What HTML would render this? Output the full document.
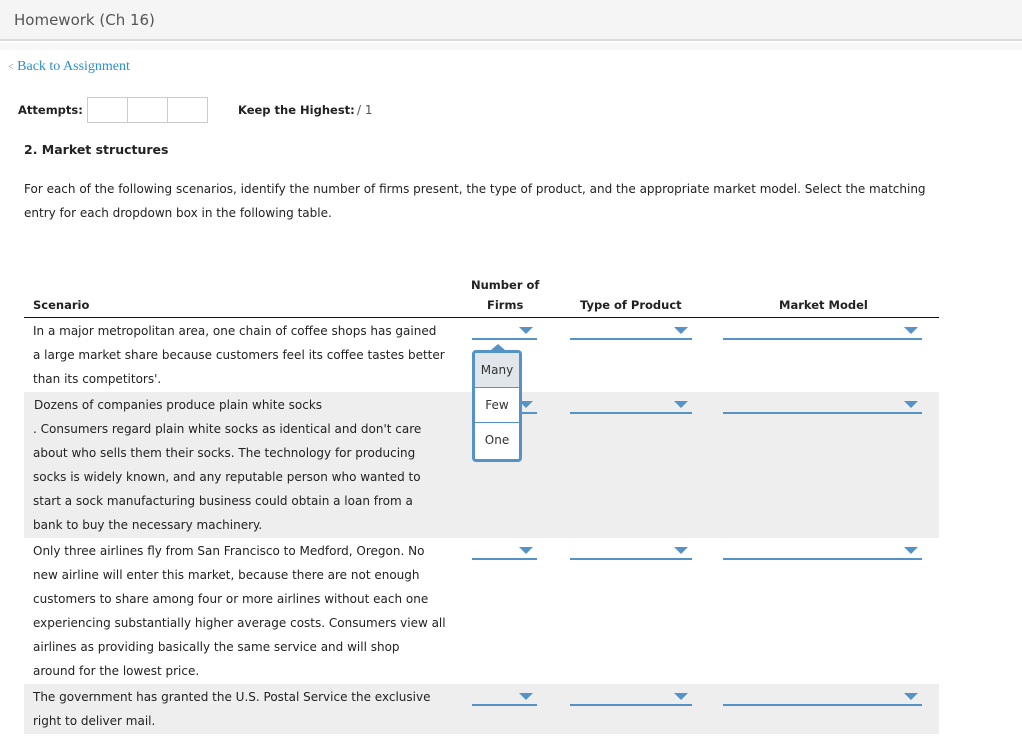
<!DOCTYPE html>
<html><head><meta charset="utf-8"><style>
*{margin:0;padding:0;box-sizing:border-box}
body{width:1022px;height:742px;background:#fff;font-family:"DejaVu Sans","Liberation Sans",sans-serif;font-size:12px;color:#222;position:relative;overflow:hidden}
.a{position:absolute;white-space:nowrap}
.hdr{position:absolute;left:0;top:0;width:1022px;height:41px;background:#f5f5f5;border-bottom:2px solid #dcdcdc}
.band{position:absolute;left:0;top:43px;width:1022px;height:7px;background:#f7f7f7}
.g{position:absolute;left:24px;width:915px;background:#eeeeee}
.ln{position:absolute;height:2px;background:#5592c6}
.tr{position:absolute;width:0;height:0;border-left:7px solid transparent;border-right:7px solid transparent;border-top:7px solid #5592c6}
.b{font-weight:bold;font-size:11.5px}
.box{position:absolute;top:97px;width:41px;height:26px;border:1px solid #ccc;background:#fff}
</style></head><body>
<div class="hdr"></div><div class="band"></div>
<div class="a" style="left:14px;top:11px;font-family:'DejaVu Sans',sans-serif;font-size:15px;color:#555">Homework (Ch 16)</div>
<div class="a" style="left:8px;top:59px;font-family:'Liberation Serif',serif;font-size:14px;color:#2a8fd0"><span style="font-size:10px;color:#888">&lt;</span> Back to Assignment</div>
<div class="a b" style="left:18px;top:103px">Attempts:</div>
<div class="box" style="left:87px"></div><div class="box" style="left:127px"></div><div class="box" style="left:167px"></div>
<div class="a b" style="left:238px;top:103px">Keep the Highest:</div>
<div class="a" style="left:357px;top:103px;color:#555">/ 1</div>
<div class="a b" style="left:24px;top:142px;font-size:12.5px">2. Market structures</div>
<div class="a" style="left:24px;top:182px">For each of the following scenarios, identify the number of firms present, the type of product, and the appropriate market model. Select the matching</div>
<div class="a" style="left:24px;top:206px">entry for each dropdown box in the following table.</div>

<div class="a b" style="left:471px;top:278px">Number of</div>
<div class="a b" style="left:33px;top:298px">Scenario</div>
<div class="a b" style="left:487px;top:298px">Firms</div>
<div class="a b" style="left:580px;top:298px">Type of Product</div>
<div class="a b" style="left:779px;top:298px">Market Model</div>
<div style="position:absolute;left:24px;top:317px;width:915px;height:1px;background:#111"></div>

<div class="g" style="top:392px;height:146px"></div>
<div class="g" style="top:684px;height:50px"></div>

<div class="a" style="left:33px;top:319px;line-height:24px">In a major metropolitan area, one chain of coffee shops has gained<br>a large market share because customers feel its coffee tastes better<br>than its competitors'.</div>
<div class="a" style="left:34px;top:393px;line-height:24px">Dozens of companies produce plain white socks</div>
<div class="a" style="left:33px;top:417px;line-height:24px">. Consumers regard plain white socks as identical and don't care<br>about who sells them their socks. The technology for producing<br>socks is widely known, and any reputable person who wanted to<br>start a sock manufacturing business could obtain a loan from a<br>bank to buy the necessary machinery.</div>
<div class="a" style="left:33px;top:539px;line-height:24px">Only three airlines fly from San Francisco to Medford, Oregon. No<br>new airline will enter this market, because there are not enough<br>customers to share among four or more airlines without each one<br>experiencing substantially higher average costs. Consumers view all<br>airlines as providing basically the same service and will shop<br>around for the lowest price.</div>
<div class="a" style="left:33px;top:685px;line-height:24px">The government has granted the U.S. Postal Service the exclusive<br>right to deliver mail.</div>

<div class="ln" style="left:472px;top:338px;width:65px"></div><div class="tr" style="left:519px;top:327px"></div>
<div class="ln" style="left:570px;top:338px;width:122px"></div><div class="tr" style="left:674px;top:327px"></div>
<div class="ln" style="left:723px;top:338px;width:199px"></div><div class="tr" style="left:904px;top:327px"></div>

<div class="ln" style="left:472px;top:412px;width:65px"></div><div class="tr" style="left:519px;top:401px"></div>
<div class="ln" style="left:570px;top:412px;width:122px"></div><div class="tr" style="left:674px;top:401px"></div>
<div class="ln" style="left:723px;top:412px;width:199px"></div><div class="tr" style="left:904px;top:401px"></div>

<div class="ln" style="left:472px;top:558px;width:65px"></div><div class="tr" style="left:519px;top:547px"></div>
<div class="ln" style="left:570px;top:558px;width:122px"></div><div class="tr" style="left:674px;top:547px"></div>
<div class="ln" style="left:723px;top:558px;width:199px"></div><div class="tr" style="left:904px;top:547px"></div>

<div class="ln" style="left:472px;top:704px;width:65px"></div><div class="tr" style="left:519px;top:693px"></div>
<div class="ln" style="left:570px;top:704px;width:122px"></div><div class="tr" style="left:674px;top:693px"></div>
<div class="ln" style="left:723px;top:704px;width:199px"></div><div class="tr" style="left:904px;top:693px"></div>

<div style="position:absolute;left:491px;top:344px;width:0;height:0;border-left:7px solid transparent;border-right:7px solid transparent;border-bottom:6px solid #5592c6"></div>
<div style="position:absolute;left:472px;top:350px;width:50px;height:112px;border:3px solid #5592c6;border-radius:4px;background:#fff;overflow:hidden">
<div style="height:35px;background:#e1e6ea;border-bottom:1px solid #5592c6;text-align:center;line-height:35px;color:#333">Many</div>
<div style="height:35px;border-bottom:1px solid #5592c6;text-align:center;line-height:35px;color:#333">Few</div>
<div style="height:35px;text-align:center;line-height:35px;color:#333">One</div>
</div>
</body></html>
